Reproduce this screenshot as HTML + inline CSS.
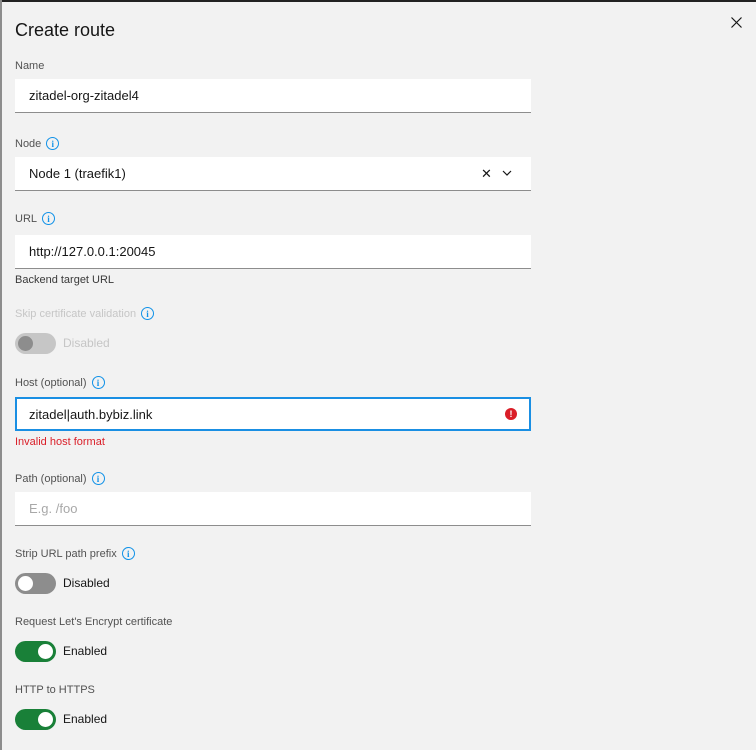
<!DOCTYPE html>
<html><head><style>
*{box-sizing:border-box;margin:0;padding:0}
body{width:756px;height:750px;background:#f2f2f2;font-family:"Liberation Sans",sans-serif;position:relative;overflow:hidden;color:#161616}
.topbar{position:absolute;left:0;top:0;width:756px;height:2px;background:#222}
.leftbar{position:absolute;left:0;top:0;width:2px;height:750px;background:#8d8d8d}
.a{position:absolute}
.title{left:15px;top:20px;font-size:18px;color:#161616}
.lbl{left:15px;font-size:11px;color:#525252;display:flex;align-items:center;gap:5px}
.info{width:13px;height:13px;border:1.2px solid #1192e8;border-radius:50%;color:#1192e8;font-size:9px;font-weight:bold;display:flex;align-items:center;justify-content:center;font-family:"Liberation Serif",serif}
.inp{left:15px;width:516px;height:34px;background:#fff;border-bottom:1px solid #8d8d8d;font-size:13px;padding-left:14px;display:flex;align-items:center}
.tog{left:15px;width:41px;height:21px;border-radius:11px}
.tog::after{content:"";position:absolute;top:3px;width:15px;height:15px;border-radius:50%;background:#fff}
.off{background:#8d8d8d}.off::after{left:3px}
.on{background:#198038}.on::after{right:3px}
.dis{background:#c6c6c6}.dis::after{left:3px;background:#8d8d8d}
.tt{left:63px;font-size:12px;color:#161616}
</style></head><body>
<div class="topbar"></div><div class="leftbar"></div>
<div class="a title">Create route</div>
<svg class="a" style="left:730px;top:16px" width="13" height="13"><path d="M1.5 1.5 L11.5 11.5 M11.5 1.5 L1.5 11.5" stroke="#161616" stroke-width="1.2"/></svg>

<div class="a lbl" style="top:60px">Name</div>
<div class="a inp" style="top:79px">zitadel-org-zitadel4</div>

<div class="a lbl" style="top:137px">Node <span class="info">i</span></div>
<div class="a inp" style="top:157px">Node 1 (traefik1)
<span class="a" style="left:466px;top:9px;font-size:13px">✕</span>
<svg class="a" style="left:487px;top:12px" width="10" height="8"><path d="M1 2 L5 6 L9 2" stroke="#161616" fill="none" stroke-width="1.2"/></svg></div>

<div class="a lbl" style="top:212px">URL <span class="info">i</span></div>
<div class="a inp" style="top:235px">http://127.0.0.1:20045</div>
<div class="a lbl" style="top:274px;color:#393939">Backend target URL</div>

<div class="a lbl" style="top:307px;color:#c6c6c6">Skip certificate validation <span class="info">i</span></div>
<div class="a tog dis" style="top:333px"></div>
<div class="a tt" style="top:336px;color:#c6c6c6">Disabled</div>

<div class="a lbl" style="top:376px">Host (optional) <span class="info">i</span></div>
<div class="a inp" style="top:397px;border:2px solid #1a8fe3;padding-left:12px">zitadel|auth.bybiz.link
<span class="a" style="left:488px;top:9px;width:12px;height:12px;border-radius:50%;background:#da1e28;color:#fff;font-size:9px;font-weight:bold;text-align:center;line-height:12px">!</span></div>
<div class="a lbl" style="top:436px;color:#da1e28">Invalid host format</div>

<div class="a lbl" style="top:472px">Path (optional) <span class="info">i</span></div>
<div class="a inp" style="top:492px;color:#a8a8a8">E.g. /foo</div>

<div class="a lbl" style="top:547px">Strip URL path prefix <span class="info">i</span></div>
<div class="a tog off" style="top:573px"></div>
<div class="a tt" style="top:576px">Disabled</div>

<div class="a lbl" style="top:616px">Request Let's Encrypt certificate</div>
<div class="a tog on" style="top:641px"></div>
<div class="a tt" style="top:644px">Enabled</div>

<div class="a lbl" style="top:684px">HTTP to HTTPS</div>
<div class="a tog on" style="top:709px"></div>
<div class="a tt" style="top:712px">Enabled</div>
</body></html>
